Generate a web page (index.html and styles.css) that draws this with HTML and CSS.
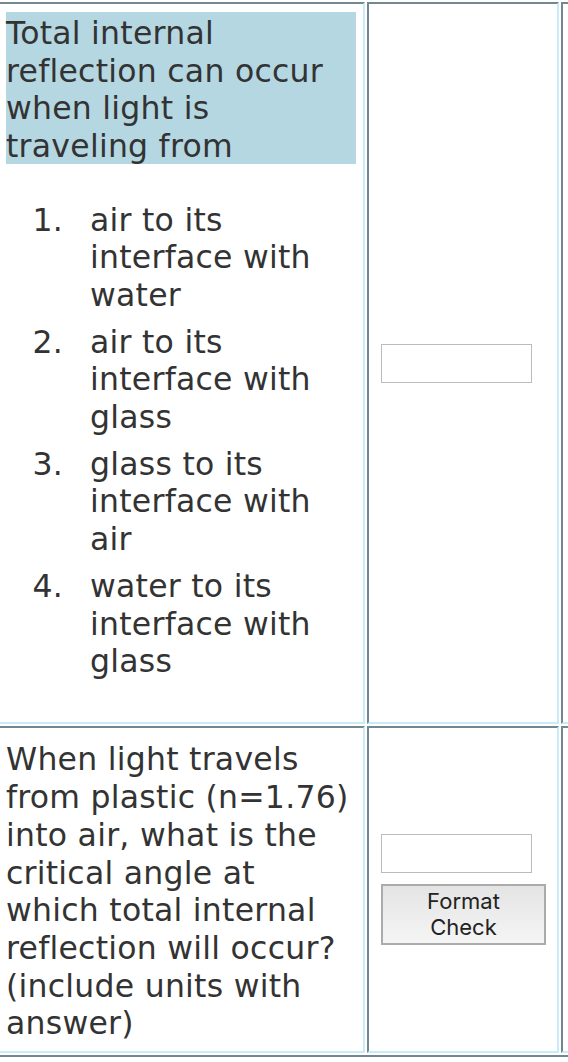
FILE: index.html
```html
<!DOCTYPE html>
<html lang="en">
<head>
<meta charset="utf-8">
<title>Question</title>
<link rel="stylesheet" href="styles.css">
</head>
<body>
<table class="quiz">
  <tr>
    <td class="q">
      <p class="prompt">Total internal reflection can occur when light is traveling from</p>
      <ol class="choices">
        <li>air to its interface with water</li>
        <li>air to its interface with glass</li>
        <li>glass to its interface with air</li>
        <li>water to its interface with glass</li>
      </ol>
    </td>
    <td class="ans">
      <div class="stack"><input type="text" class="field" aria-label="Answer 1"></div>
    </td>
    <td class="spare"></td>
  </tr>
  <tr>
    <td class="q">
      <p class="plain">When light travels from plastic (n=1.76) into air, what is the critical angle at which total internal reflection will occur? (include units with answer)</p>
    </td>
    <td class="ans">
      <div class="stack">
        <input type="text" class="field" aria-label="Answer 2">
        <button type="button" class="check">Format<br>Check</button>
      </div>
    </td>
    <td class="spare"></td>
  </tr>
</table>
</body>
</html>
```

FILE: styles.css
```css
html, body {
  margin: 0;
  padding: 0;
  overflow: hidden;
  background: #fff;
}

body {
  font-family: "DejaVu Sans", Verdana, sans-serif;
  color: #333;
}

.quiz {
  table-layout: fixed;
  width: 820px;
  border-collapse: separate;
  border-spacing: 2px;
  margin-left: -6px;
  border: 0;
  border-bottom: 2px solid #738791;
}

.quiz td {
  box-sizing: border-box;
  border: 2px solid;
  border-color: #738791 #c8ecf8 #c8ecf8 #738791;
  padding: 8px;
  vertical-align: middle;
  font-size: 31.5px;
  letter-spacing: 0.25px;
  line-height: 37.7px;
}

.quiz td.q {
  width: 369px;
  padding-right: 7px;
}

.quiz td.ans {
  width: 192px;
}

.prompt {
  margin: 0;
  box-sizing: border-box;
  height: 152px;
  padding: 3px 2px 0 0;
  background: #b4d7e2;
}

.plain {
  margin: 0;
  padding: 5px 2px 0 0;
}

.choices {
  list-style: none;
  margin: 33px 0 29px;
  padding: 0 26px 0 0;
  counter-reset: item;
}

.choices li {
  display: grid;
  grid-template-columns: 84px 1fr;
  padding: 4.5px 0;
  counter-increment: item;
}

.choices li::before {
  content: counter(item) ".";
  text-align: right;
  padding-right: 27px;
}

.stack {
  display: flex;
  flex-direction: column;
  align-items: flex-start;
  gap: 11px;
  padding-left: 4px;
}

.field {
  box-sizing: border-box;
  width: 151px;
  height: 39px;
  margin: 0;
  border: 1px solid #bcbcbc;
  background: #fff;
}

.check {
  box-sizing: border-box;
  width: 165px;
  height: 61px;
  margin: 0;
  padding: 0;
  border: 2px solid #ababab;
  background: linear-gradient(#e4e4e4, #f5f5f5);
  font-family: Inter, "Noto Sans", sans-serif;
  font-size: 22px;
  line-height: 25.7px;
  color: #222;
}
```
